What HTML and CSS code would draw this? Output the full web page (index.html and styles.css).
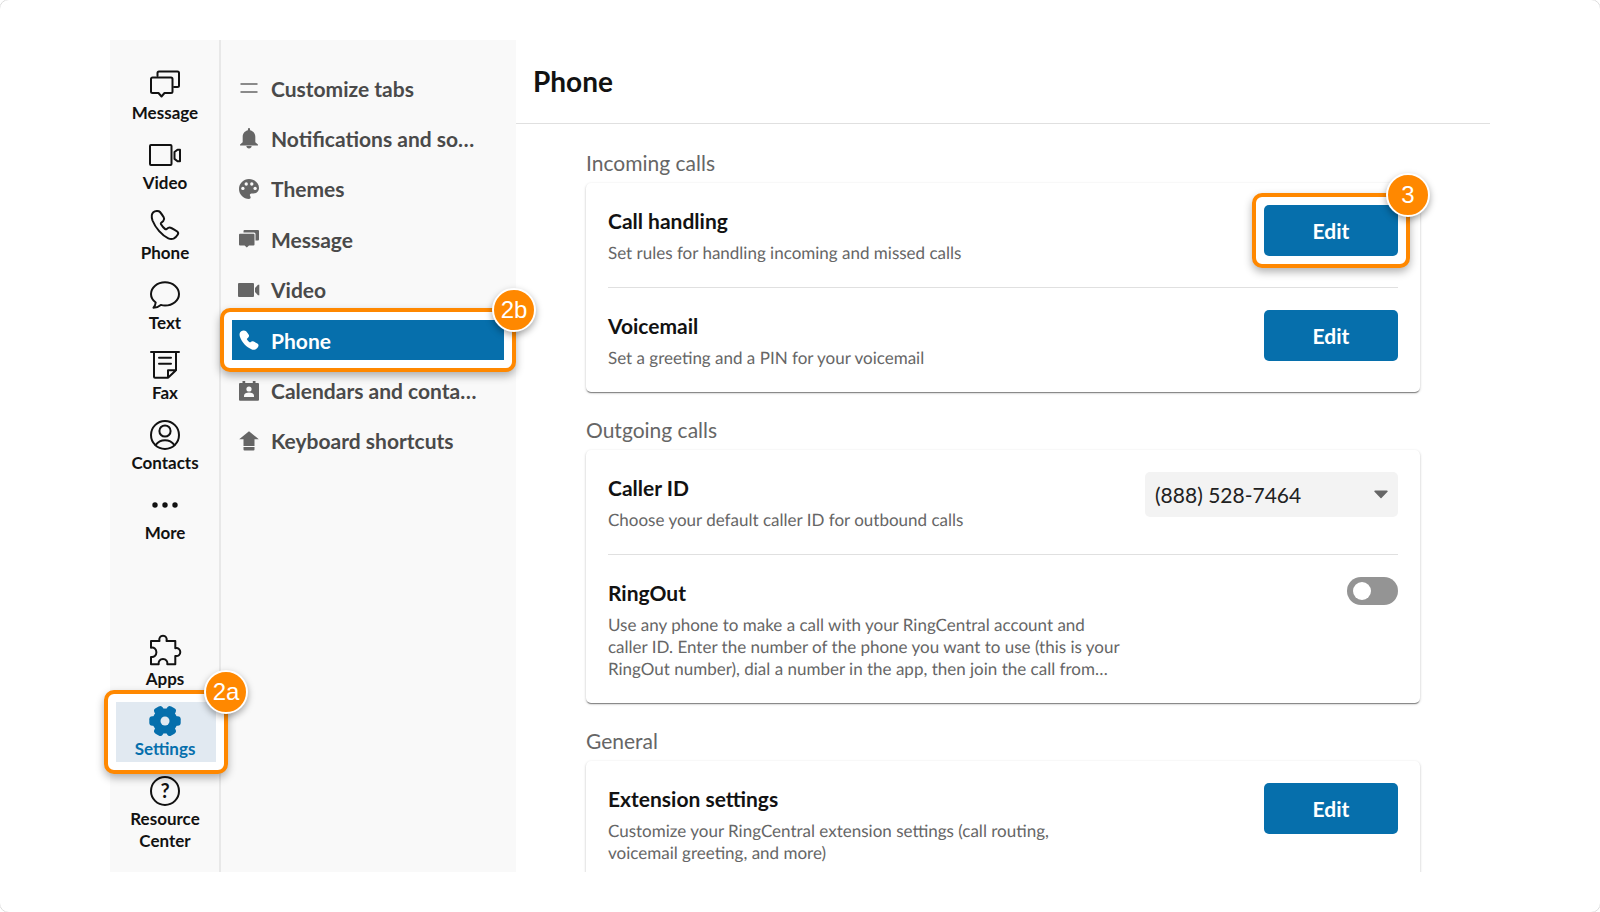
FILE: index.html
```
<!DOCTYPE html>
<html lang="en">
<head>
    <meta charset="UTF-8">
    <title>Phone settings</title>
    <link rel="stylesheet" href="styles.css">
</head>
<body>
<div class="frame">
    <div class="app">
        <nav class="rail">
            <ul>
                <li><a href="#">
                    <svg viewBox="0 0 30 30"><path d="M2.5 7.5h18.5a1.5 1.5 0 0 1 1.5 1.5v12.5a1.5 1.5 0 0 1-1.5 1.5h-6.500l-3 3.500-3-3.500h-6a1.500 1.500 0 0 1-1.500-1.500v-12.500a1.500 1.500 0 0 1 1.500-1.500z"/><path d="M7.500 6v-3a1.500 1.500 0 0 1 1.500-1.500h18.500a1.500 1.500 0 0 1 1.500 1.500v12.500a1.500 1.500 0 0 1-1.500 1.500h-3.500"/></svg>
                    Message</a></li>
                <li><a href="#">
                    <svg viewBox="0 0 30 30"><rect x="0" y="5" width="21.5" height="20" rx="1"/><path d="M24.500 12l3-2.300h2.500v11.500h-2.500l-3-2.300z"/></svg>
                    Video</a></li>
                <li><a href="#">
                    <svg viewBox="0 0 30 30"><path d="M3.300 2.300C5 .8 8.500 .2 10 2c1.500 1.800 2.500 3.300 3.700 5.300.8 1.300.5 2.500-.4 3.600L11 13c-.3.400-.2.800 0 1.200 1.200 2 2.600 3.600 4.200 4.900.6.400 1 .3 1.500-.1 1.300-1.200 2.900-1.900 4.600-1 2 1 4 2.200 5.900 3.500 1 .8 1.200 2 .6 3-1 1.700-2.300 3.200-4.200 4.100-1.800.6-3.700.4-5.300-.3C12 25.500 5.500 18 2.500 10.500 1.500 7.500.8 4.600 3.300 2.300z"/></svg>
                    Phone</a></li>
                <li><a href="#">
                    <svg viewBox="0 0 30 30"><path d="M15 2.300c7.700 0 14 5.200 14 11.700s-6.300 11.500-14 11.500c-1.400 0-2.800-.2-4.200-.6-2 1.700-4.500 2.800-7.300 2.800 1.300-1.500 2-3.300 2.200-5.200C2.800 20.300 1 17.300 1 14 1 7.500 7.300 2.300 15 2.300z"/></svg>
                    Text</a></li>
                <li><a href="#">
                    <svg viewBox="0 0 30 30"><path d="M1 2h28M4 2v24.700a1 1 0 0 0 1 1h13l8-7.400V2M18 27.700v-7.400h8M9 7.700h12M9 13.700h12"/></svg>
                    Fax</a></li>
                <li><a href="#">
                    <svg viewBox="0 0 30 30"><circle cx="15" cy="15" r="14"/><circle cx="15" cy="11" r="5.600"/><path d="M5.500 25.200c5-6.500 14-6.500 19 0"/></svg>
                    Contacts</a></li>
                <li><a href="#">
                    <svg class="solid" viewBox="0 0 30 30"><circle cx="5" cy="15" r="2.700"/><circle cx="15" cy="15" r="2.700"/><circle cx="25" cy="15" r="2.700"/></svg>
                    More</a></li>
            </ul>
            <ul>
                <li><a href="#">
                    <svg viewBox="0 0 30 30"><path d="M1 5h8.500c-.8-3 .8-5.200 3.500-5.200s4.300 2.200 3.500 5.200H25.300v7.200c3-.6 5 1.200 5 3.900s-2 4.500-5 3.900v8.300h-8c.6-3-1.300-5.200-4.300-5.200s-4.900 2.200-4.300 5.200H1v-7.300c3 .6 5.400-1.500 5.400-4.700S4 11.100 1 11.700z"/></svg>
                    Apps</a></li>
                <li class="marked"><a href="#" class="current">
                    <svg class="solid" viewBox="0 0 30 30"><circle cx="15" cy="15" r="12.500"/><rect x="-.7" y="10.200" width="31.400" height="9.600" rx="3"/><rect x="-.7" y="10.200" width="31.400" height="9.600" rx="3" transform="rotate(60 15 15)"/><rect x="-.7" y="10.200" width="31.400" height="9.600" rx="3" transform="rotate(120 15 15)"/><circle class="hole" cx="15" cy="15" r="4.500"/></svg>
                    Settings</a><b class="step">2a</b></li>
                <li><a href="#">
                    <svg viewBox="0 0 30 30"><circle cx="15" cy="15" r="14"/><text x="15" y="22">?</text></svg>
                    Resource Center</a></li>
            </ul>
        </nav>

        <nav class="tabs">
            <ul>
                <li><a href="#">
                    <svg viewBox="0 0 20 20"><path class="line" d="M1.500 6h17M1.500 14h17"/></svg>
                    Customize tabs</a></li>
                <li><a href="#">
                    <svg viewBox="2.500 2.500 19 19"><path d="M12 22c1.400 0 2.500-.9 2.500-2.300h-5C9.500 21.100 10.600 22 12 22zm6-6v-5c0-3.300-2-5.700-5-6.400V3.500a1 1 0 0 0-2 0v1.100c-3 .7-5 3.100-5 6.400v5l-2.500 2.200v1h17v-1z"/></svg>
                    Notifications and so…</a></li>
                <li><a href="#">
                    <svg viewBox="3 3 18 18"><path d="M12 3c-4.970 0-9 4.030-9 9s4.030 9 9 9c.83 0 1.500-.67 1.500-1.500 0-.39-.15-.74-.39-1.010-.23-.26-.38-.61-.38-.99 0-.83.67-1.500 1.500-1.500H16c2.760 0 5-2.240 5-5 0-4.420-4.030-8-9-8z"/><circle class="hole" cx="6.500" cy="11.500" r="1.500"/><circle class="hole" cx="9.500" cy="7.500" r="1.500"/><circle class="hole" cx="14.500" cy="7.500" r="1.500"/><circle class="hole" cx="17.500" cy="11.500" r="1.500"/></svg>
                    Themes</a></li>
                <li><a href="#">
                    <svg viewBox="0 0 20 20"><path d="M5.500 1H19a1 1 0 0 1 1 1v8.500a1 1 0 0 1-1 1h-2.500V5a1.500 1.500 0 0 0-1.500-1.500H4.500V2a1 1 0 0 1 1-1z"/><path d="M1 4.700h13.500a1 1 0 0 1 1 1v9.700a1 1 0 0 1-1 1H10l-2.200 2.200-2.200-2.200H1a1 1 0 0 1-1-1V5.700a1 1 0 0 1 1-1z"/></svg>
                    Message</a></li>
                <li><a href="#">
                    <svg viewBox="0 0 20 20"><rect x="-1" y="3" width="16" height="14" rx="1"/><path d="M16 8l3-3.300h1.300v10.600H19L16 12z"/></svg>
                    Video</a></li>
                <li class="marked"><a href="#" class="current">
                    <svg viewBox="0 0 30 30"><path d="M3.300 1.800C5.500.2 9 .2 10.700 2c1.500 1.800 2.800 3.300 3.900 5.300.8 1.300.5 2.500-.4 3.600L12 13c-.3.400-.2.800 0 1.200 1 1.700 2.200 3 3.800 4.100.6.400 1 .3 1.500-.1 1.300-1.200 2.900-1.900 4.600-1 2.300 1 4.300 2.200 6.200 3.500 1.300.8 1.500 2.600.8 3.900-1 2-2.500 3.700-4.500 4.500-1.800.7-4 .6-5.800-.3C11.500 26 4.500 18.500 1.500 10.500.5 7.500.3 4.100 3.300 1.800z"/></svg>
                    Phone</a><b class="step">2b</b></li>
                <li><a href="#">
                    <svg viewBox="0 0 20 20"><path d="M1 2h2.500V0h2.700v2h7.600V0h2.700v2H19a1 1 0 0 1 1 1v15.700a1 1 0 0 1-1 1H1a1 1 0 0 1-1-1V3a1 1 0 0 1 1-1z"/><circle class="hole" cx="10" cy="8" r="2.600"/><path class="hole" d="M5 16v-1.500c0-4 10-4 10 0V16z"/></svg>
                    Calendars and conta…</a></li>
                <li><a href="#">
                    <svg viewBox="0 0 20 20"><path d="M10 .3L19.800 8.200H15.500V15h-11V8.200H.2zM4.500 16h11v2.500a1 1 0 0 1-1 1h-9a1 1 0 0 1-1-1z"/></svg>
                    Keyboard shortcuts</a></li>
            </ul>
        </nav>

        <main>
            <header>
                <h1>Phone</h1>
            </header>
            <div class="content">
                <section>
                    <h2>Incoming calls</h2>
                    <div class="card">
                        <div class="row">
                            <div class="info">
                                <h3>Call handling</h3>
                                <p>Set rules for handling incoming and missed calls</p>
                            </div>
                            <div class="action marked"><button type="button">Edit</button><b class="step">3</b></div>
                        </div>
                        <div class="row">
                            <div class="info">
                                <h3>Voicemail</h3>
                                <p>Set a greeting and a PIN for your voicemail</p>
                            </div>
                            <div class="action"><button type="button">Edit</button></div>
                        </div>
                    </div>
                </section>
                <section>
                    <h2>Outgoing calls</h2>
                    <div class="card">
                        <div class="row">
                            <div class="info">
                                <h3><label for="caller">Caller ID</label></h3>
                                <p>Choose your default caller ID for outbound calls</p>
                            </div>
                            <div class="action select">
                                <select id="caller">
                                    <option>(888) 528-7464</option>
                                </select>
                                <svg viewBox="0 0 14 9"><path d="M1 .5h12a.7.7 0 0 1 .5 1.200L7.500 8a.7.7 0 0 1-1 0L.5 1.700A.7.7 0 0 1 1 .5z"/></svg>
                            </div>
                        </div>
                        <div class="row">
                            <div class="info">
                                <h3><label for="ringout">RingOut</label></h3>
                                <p>Use any phone to make a call with your RingCentral account and caller ID. Enter the number of the phone you want to use (this is your RingOut number), dial a number in the app, then join the call from…</p>
                            </div>
                            <div class="action"><input type="checkbox" id="ringout" class="toggle"></div>
                        </div>
                    </div>
                </section>
                <section>
                    <h2>General</h2>
                    <div class="card">
                        <div class="row">
                            <div class="info">
                                <h3>Extension settings</h3>
                                <p>Customize your RingCentral extension settings (call routing, voicemail greeting, and more)</p>
                            </div>
                            <div class="action"><button type="button">Edit</button></div>
                        </div>
                    </div>
                </section>
            </div>
        </main>
    </div>
</div>
</body>
</html>
```

FILE: styles.css
```
* {
    margin: 0;
    padding: 0;
    box-sizing: border-box;
}

body {
    font-family: Lato, "Liberation Sans", sans-serif;
    color: #121212;
    background: #fff;
    overflow: hidden;
}

ul {
    list-style: none;
}

a {
    color: inherit;
    text-decoration: none;
}

.frame {
    margin: -1px;
    padding: 40px 110px;
    border: 1px solid #ddd;
    border-radius: 10px;
}
.app {
    display: flex;
    height: calc(100vh - 80px);
}

/* left rail */
.rail {
    display: flex;
    flex-direction: column;
    justify-content: space-between;
    flex: none;
    width: 111px;
    padding: 26px 3px 18px 6px;
    border-right: 2px solid #e8e8e8;
    background: #f9f9f9;
}
.rail ul {
    display: flex;
    flex-direction: column;
    gap: 10px;
}
.rail a {
    display: block;
    padding: 4px 9px 2px 7px;
    font-size: 17px;
    font-weight: 700;
    line-height: 22px;
    text-align: center;
}
.rail svg {
    display: block;
    width: 30px;
    height: 30px;
    margin: 0 auto 2px;
    overflow: visible;
    fill: none;
    stroke: #121212;
    stroke-width: 2;
    stroke-linejoin: round;
    stroke-linecap: round;
}
.rail svg.solid {
    fill: currentColor;
    stroke: none;
}
.rail svg text {
    font-size: 20px;
    fill: #121212;
    stroke: none;
    text-anchor: middle;
}
.rail .current {
    color: #066fac;
    background: #e1e9f1;
}
.rail .hole {
    fill: #e1e9f1;
}

/* settings tabs */
.tabs {
    flex: none;
    width: 295px;
    padding: 28px 12px 0 11px;
    background: #f9f9f9;
}
.tabs ul {
    display: flex;
    flex-direction: column;
    justify-content: space-between;
    height: 393px;
}
.tabs a {
    display: flex;
    align-items: center;
    gap: 12px;
    height: 40px;
    padding: 0 7px;
    font-size: 21px;
    font-weight: 700;
    color: #4a4a4a;
    white-space: nowrap;
}
.tabs svg {
    flex: none;
    width: 20px;
    height: 20px;
    overflow: visible;
    fill: #666;
}
.tabs .line {
    stroke: #666;
    stroke-width: 1.3;
}
.tabs .hole {
    fill: #f9f9f9;
}
.tabs .current {
    color: #fff;
    background: #066fac;
}
.tabs .current svg {
    fill: #fff;
}

/* step markers */
.marked {
    position: relative;
    z-index: 1;
}
.marked::before {
    content: "";
    position: absolute;
    inset: -12px;
    z-index: -1;
    border: 4px solid #ff8800;
    border-radius: 10px;
    background: #fff;
    box-shadow: 0 4px 8px rgba(0, 0, 0, .3);
}
.step {
    position: absolute;
    top: -32px;
    right: -32px;
    width: 44px;
    height: 44px;
    border: 2px solid #fff;
    border-radius: 50%;
    background: #ff8800;
    box-shadow: 0 3px 7px rgba(0, 0, 0, .35);
    color: #fff;
    font: 24px/40px "Liberation Sans", Arial, sans-serif;
    text-align: center;
}

/* main */
main {
    flex: 1;
    min-width: 0;
    overflow: hidden;
}
header {
    padding: 22px 17px;
    border-bottom: 1px solid #e0e0e0;
}
h1 {
    font-size: 28px;
    line-height: 39px;
}
.content {
    padding: 23px 70px;
}
section {
    margin-bottom: 22px;
}
h2 {
    padding-bottom: 4px;
    font-size: 21px;
    font-weight: 400;
    line-height: 32px;
    color: #666;
}
.card {
    padding: 0 22px;
    border-radius: 5px;
    background: #fff;
    box-shadow: 0 2px 1px -1px rgba(0, 0, 0, .3), 0 1px 1px rgba(0, 0, 0, .16), 0 1px 3px rgba(0, 0, 0, .2);
}
.row {
    display: flex;
    justify-content: space-between;
    align-items: flex-start;
    padding: 22px 0 23px;
}
.row + .row {
    border-top: 1px solid #e0e0e0;
}
.info {
    max-width: 514px;
}
h3 {
    margin-bottom: 5px;
    font-size: 21px;
    line-height: 32px;
}
p {
    font-size: 17px;
    line-height: 22px;
    color: #666;
    text-rendering: geometricPrecision;
}

.action {
    display: flex;
}
button {
    width: 134px;
    height: 51px;
    border: 0;
    border-radius: 5px;
    background: #066fac;
    color: #fff;
    font: 700 21px Lato, sans-serif;
}
.select {
    position: relative;
}
.select select {
    width: 253px;
    height: 45px;
    padding: 0 40px 0 10px;
    border: 0;
    border-radius: 5px;
    background: #f3f3f3;
    color: #212121;
    font: 21px Lato, sans-serif;
    appearance: none;
}
.select svg {
    position: absolute;
    top: 18px;
    right: 10px;
    width: 14px;
    height: 9px;
    fill: #666;
    pointer-events: none;
}
.toggle {
    width: 51px;
    height: 28px;
    padding: 5px 6px;
    border-radius: 14px;
    background: #949494;
    appearance: none;
}
.toggle::before {
    content: "";
    display: block;
    width: 18px;
    height: 18px;
    border-radius: 50%;
    background: #fff;
}
.toggle:checked {
    padding-left: 27px;
    background: #066fac;
}
```
